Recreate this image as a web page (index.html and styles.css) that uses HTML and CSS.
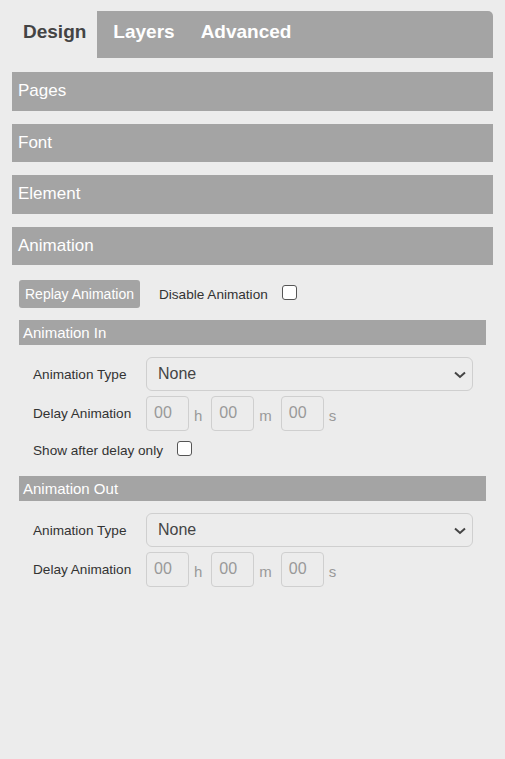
FILE: index.html
```html
<!DOCTYPE html>
<html>
<head>
<meta charset="utf-8">
<link rel="stylesheet" href="styles.css">
</head>
<body>
<div class="panel">
  <div class="tabs">
    <div class="tab tab-active">Design</div>
    <div class="tab tab-layers">Layers</div>
    <div class="tab">Advanced</div>
  </div>
  <div class="section">Pages</div>
  <div class="section">Font</div>
  <div class="section">Element</div>
  <div class="section">Animation</div>
  <div class="anim-body">
    <div class="top-row">
      <button class="replay">Replay Animation</button>
      <span class="lbl">Disable Animation</span>
      <span class="check"></span>
    </div>
    <div class="subhead">Animation In</div>
    <div class="fields">
      <div class="row row-select">
        <span class="field-label">Animation Type</span>
        <div class="select">None
          <svg class="chev" width="12" height="8" viewBox="0 0 12 8"><path d="M1 1.5 L6 6 L11 1.5" fill="none" stroke="#444" stroke-width="2"/></svg>
        </div>
      </div>
      <div class="row row-delay">
        <span class="field-label">Delay Animation</span>
        <span class="num">00</span><span class="unit">h</span>
        <span class="num">00</span><span class="unit">m</span>
        <span class="num">00</span><span class="unit">s</span>
      </div>
      <div class="row row-show">
        <span class="lbl">Show after delay only</span>
        <span class="check"></span>
      </div>
    </div>
    <div class="subhead subhead-out">Animation Out</div>
    <div class="fields">
      <div class="row row-select">
        <span class="field-label">Animation Type</span>
        <div class="select">None
          <svg class="chev" width="12" height="8" viewBox="0 0 12 8"><path d="M1 1.5 L6 6 L11 1.5" fill="none" stroke="#444" stroke-width="2"/></svg>
        </div>
      </div>
      <div class="row row-delay">
        <span class="field-label">Delay Animation</span>
        <span class="num">00</span><span class="unit">h</span>
        <span class="num">00</span><span class="unit">m</span>
        <span class="num">00</span><span class="unit">s</span>
      </div>
    </div>
  </div>
</div>
</body>
</html>
```
FILE: styles.css
```css
html, body {
  margin: 0;
  padding: 0;
  background: #ececec;
  font-family: "Liberation Sans", Arial, sans-serif;
}
.panel {
  width: 481px;
  margin: 0 0 0 12px;
  padding-top: 11px;
}
.tabs {
  display: flex;
  height: 47px;
  background: #a4a4a4;
  border-radius: 0 5px 0 0;
  margin-bottom: 14px;
}
.tab {
  padding: 9px 13px 0 13px;
  line-height: 24px;
  font-size: 19px;
  font-weight: bold;
  color: #fff;
}
.tab-active {
  background: #ececec;
  color: #444;
  padding-left: 11px;
  padding-right: 11px;
}
.tab-layers {
  padding-left: 16px;
}
.section {
  height: 38.5px;
  line-height: 38.5px;
  background: #a4a4a4;
  color: #fff;
  font-size: 17px;
  padding-left: 6px;
  margin-bottom: 13px;
}
.anim-body {
  padding: 2px 7px 0 7px;
}
.top-row {
  display: flex;
  align-items: center;
  height: 28px;
}
.replay {
  height: 28px;
  padding: 0 6px;
  border: none;
  border-radius: 3px;
  background: #a4a4a4;
  color: #fff;
  font-family: "Liberation Sans", Arial, sans-serif;
  font-size: 14px;
  margin: 0 19px 0 0;
}
.lbl {
  font-size: 13.6px;
  color: #333;
}
.check {
  width: 13px;
  height: 13px;
  border: 1px solid #555;
  border-radius: 3px;
  background: #fff;
  margin-left: 14px;
  position: relative;
  top: -2px;
}
.subhead {
  margin-top: 12px;
  height: 25px;
  line-height: 25px;
  background: #a4a4a4;
  color: #fff;
  font-size: 15px;
  padding-left: 4px;
}
.subhead-out {
  margin-top: 7px;
}
.fields {
  padding: 12px 13px 0 14px;
}
.row {
  display: flex;
  align-items: center;
}
.field-label {
  width: 113px;
  flex: none;
  font-size: 13.6px;
  color: #333;
}
.row-select {
  height: 34px;
}
.select {
  flex: 1;
  height: 32px;
  border: 1px solid #cfcfcf;
  border-radius: 6px;
  background: #ececec;
  display: flex;
  align-items: center;
  padding-left: 11px;
  font-size: 16px;
  color: #444;
  position: relative;
}
.chev {
  position: absolute;
  right: 6px;
  top: 13px;
}
.row-delay {
  height: 35px;
  margin-top: 5px;
}
.num {
  width: 34px;
  height: 33px;
  line-height: 31px;
  border: 1px solid #cfcfcf;
  border-radius: 4px;
  padding-left: 7px;
  font-size: 16px;
  color: #999;
  box-sizing: content-box;
}
.unit {
  font-size: 15px;
  color: #999;
  margin: 3px 9px 0 5px;
}
.row-show {
  height: 38px;
}
```
